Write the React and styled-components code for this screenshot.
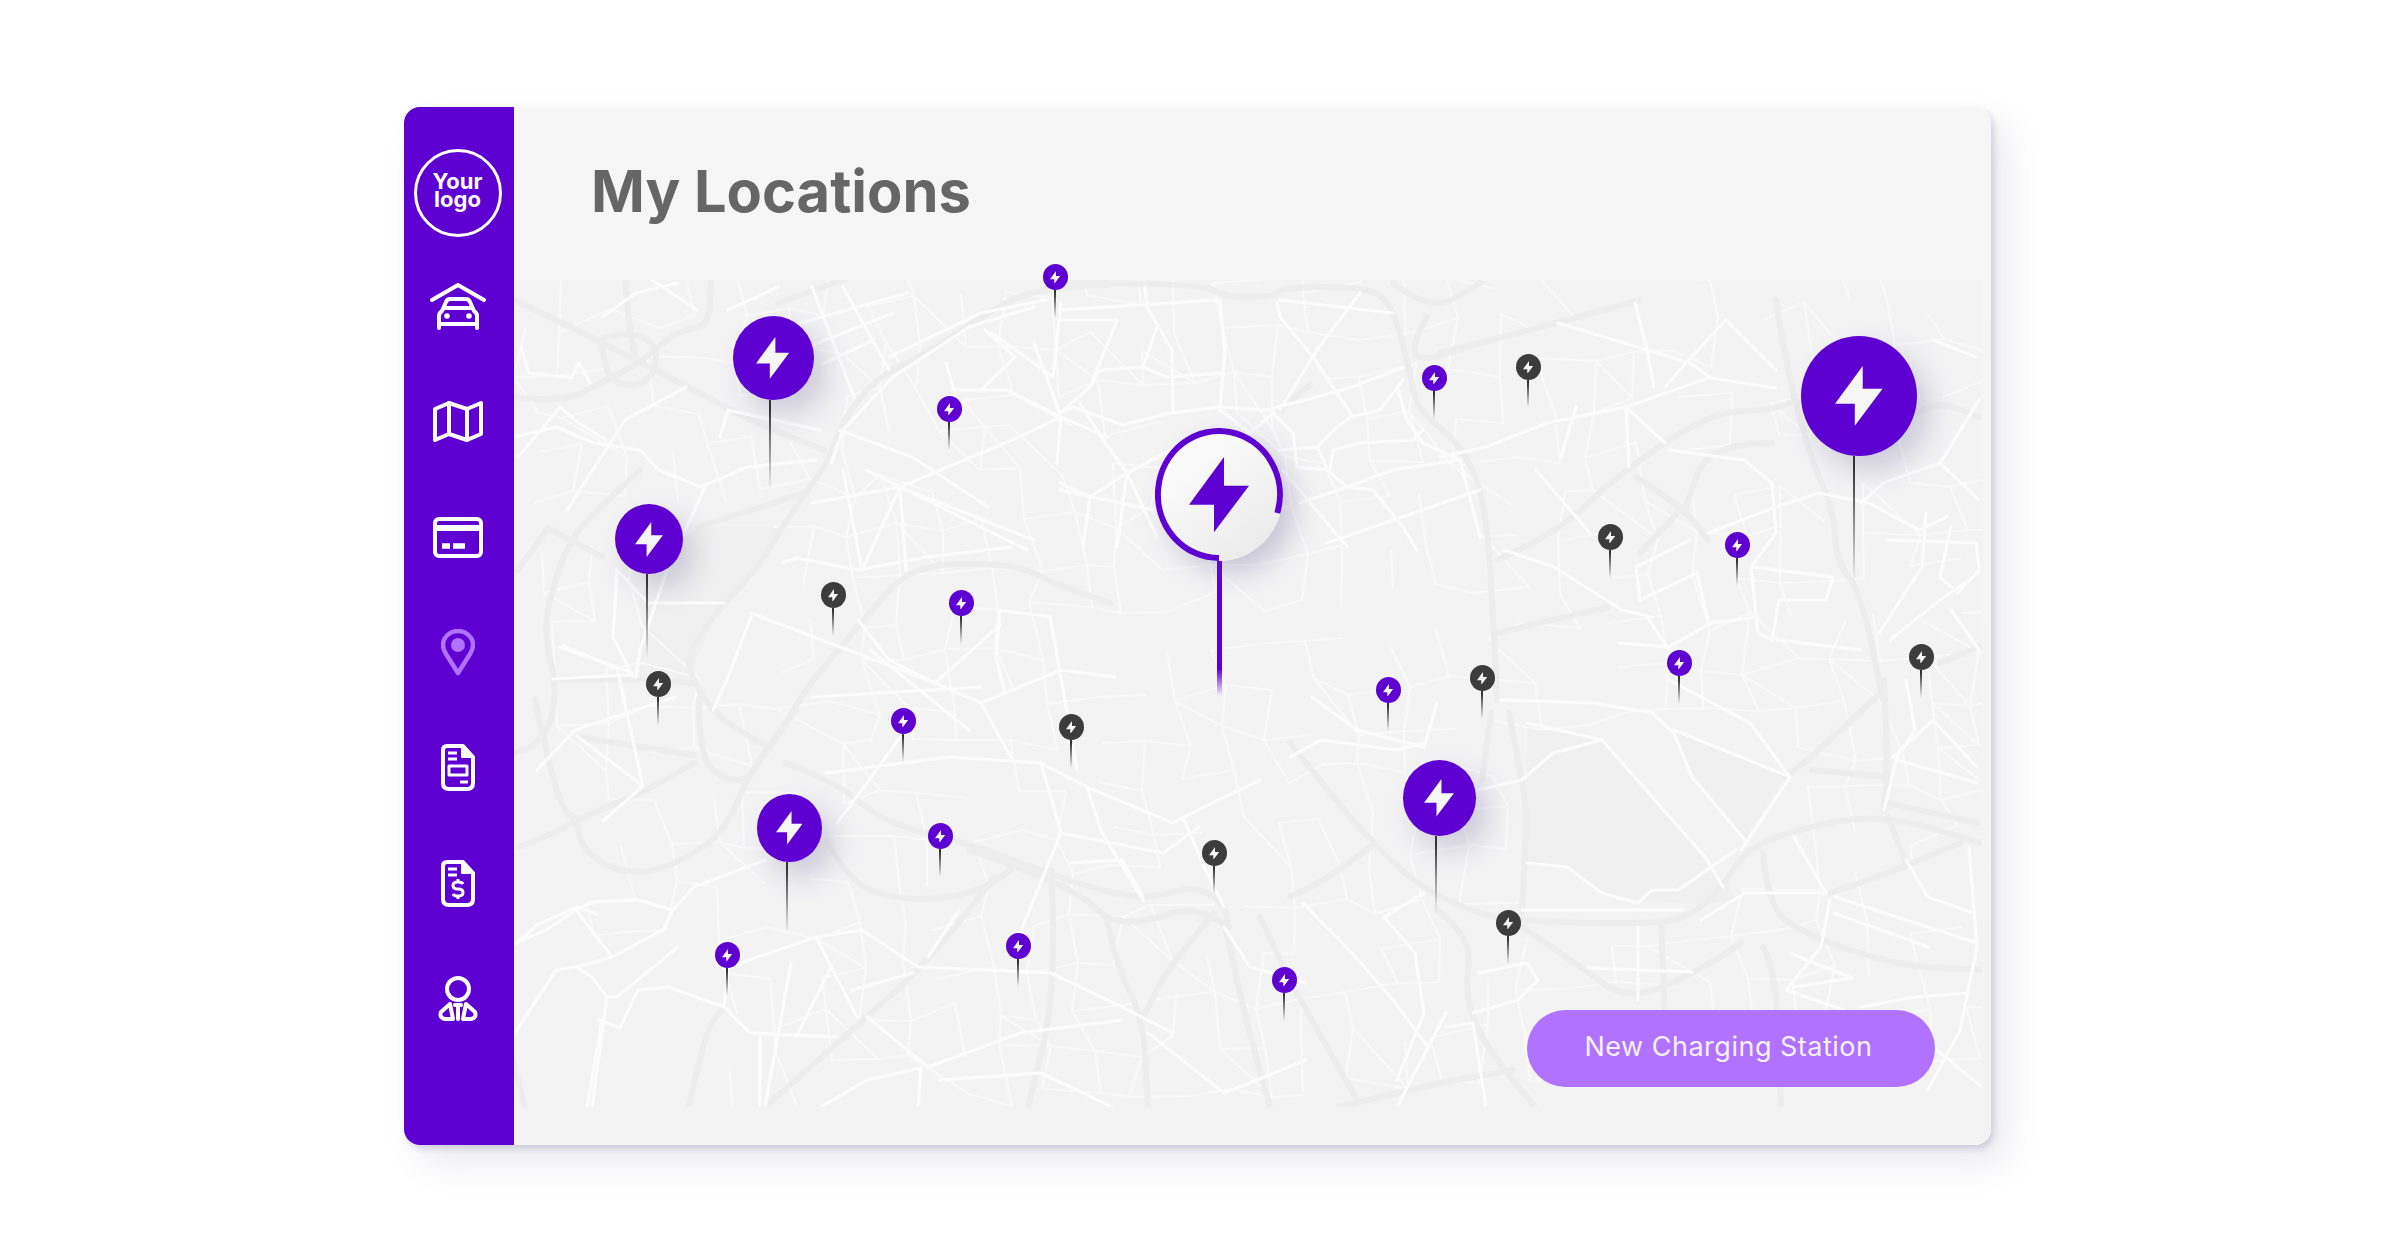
import React from 'react'
import styled, { createGlobalStyle } from 'styled-components'

const PURPLE = '#5f00d3'
const LILAC = '#b072ff'
const DARK = '#3c3c3c'

// map drawing uses the coordinates of the full page, the viewBox crops it
const MAP_X = 514
const MAP_Y = 280
const MAP_W = 1468
const MAP_H = 827

const GlobalStyle = createGlobalStyle`
  html, body { margin: 0; background: #fff; }
  body { font-family: Inter, "Liberation Sans", sans-serif; }
`

const Page = styled.div`
  width: 2400px;
  height: 1260px;
  padding: 107px 0 0 404px;
  box-sizing: border-box;
  background: #fff;
  overflow: hidden;
`

const Card = styled.div`
  display: flex;
  width: 1587px;
  height: 1038px;
  border-radius: 16px;
  background: linear-gradient(to bottom, #f6f6f6, #f3f3f3);
  box-shadow: 3px 4px 6px rgba(110, 105, 150, 0.24), 16px 18px 34px rgba(110, 105, 150, 0.14);
`

const Sidebar = styled.nav`
  display: flex;
  flex-direction: column;
  align-items: center;
  flex: 0 0 110px;
  padding: 42px 3px 0 0;
  box-sizing: border-box;
  background: ${PURPLE};
  border-radius: 16px 0 0 16px;
`

const Logo = styled.div`
  width: 88px;
  height: 88px;
  box-sizing: border-box;
  padding-top: 20px;
  margin-bottom: 12px;
  border: 3px solid #fff;
  border-radius: 50%;
  color: #fff;
  font-size: 22px;
  font-weight: 700;
  line-height: 18px;
  text-align: center;
`

const NavItem = styled.div`
  display: flex;
  align-items: center;
  justify-content: center;
  height: 115.3px;
  color: ${p => (p.$active ? LILAC : '#fff')};
`

const Main = styled.div`
  display: flex;
  flex-direction: column;
  flex: 1;
  min-width: 0;
`

const Header = styled.header`
  display: flex;
  align-items: center;
  flex: 0 0 173px;
  box-sizing: border-box;
  padding: 0 0 4px 77px;
`

const Title = styled.h1`
  margin: 0;
  color: #666;
  font-size: 57.8px;
  font-weight: 700;
  line-height: 1;
`

const MapArea = styled.div`
  position: relative;
  width: ${MAP_W}px;
  height: ${MAP_H}px;
  background: #f3f3f4;
`

const Roads = styled.svg`
  display: block;
  width: 100%;
  height: 100%;
`

const PinWrap = styled.div`
  position: absolute;
  left: ${p => p.$x - MAP_X}px;
  top: ${p => p.$y - MAP_Y}px;
  display: flex;
  flex-direction: column;
  align-items: center;
  width: ${p => p.$size}px;
  margin-left: ${p => -p.$size / 2}px;
  margin-top: ${p => (-p.$size * 1.035) / 2}px;
`

const PinHead = styled.div`
  display: flex;
  align-items: center;
  justify-content: center;
  width: ${p => p.$size}px;
  height: ${p => p.$size * 1.035}px;
  border-radius: 50%;
  background: ${p => p.$color};
  box-shadow: ${p => (p.$big ? '12px 14px 28px rgba(85, 75, 135, 0.24)' : 'none')};
`

const PinStem = styled.div`
  width: 2px;
  height: ${p => p.$length}px;
  margin-right: ${p => p.$shift}px;
  background: linear-gradient(to bottom, #333 10%, rgba(70, 70, 70, 0));
`

const HeroWrap = styled.div`
  position: absolute;
  left: ${1155 - MAP_X}px;
  top: ${428 - MAP_Y}px;
  display: flex;
  flex-direction: column;
  align-items: center;
  width: 128px;
`

const HeroDisc = styled.div`
  position: relative;
  display: flex;
  align-items: center;
  justify-content: center;
  width: 128px;
  height: 133px;
  border-radius: 50%;
  background: linear-gradient(140deg, #f9f9f9 30%, #e9e9ea 95%);
  box-shadow: 12px 12px 26px rgba(85, 75, 135, 0.26);
`

const HeroRing = styled.svg`
  position: absolute;
  inset: 0;
`

const HeroStem = styled.div`
  width: 5px;
  height: 135px;
  background: linear-gradient(to bottom, ${PURPLE} 80%, rgba(95, 0, 211, 0));
`

const AddButton = styled.button`
  position: absolute;
  right: 47px;
  bottom: 20px;
  width: 408px;
  height: 77px;
  padding: 0 5px 4px 0;
  border: 0;
  border-radius: 39px;
  background: ${LILAC};
  color: #f7f1ff;
  font-family: inherit;
  font-size: 27px;
  font-weight: 400;
  letter-spacing: 0.5px;
`

const Bolt = ({ width, color }) => (
  <svg width={width} height={(width * 226) / 180} viewBox="0 0 180 226">
    <polygon points="105,0 0,143 75,143 75,226 180,86 105,86" fill={color} />
  </svg>
)

const iconProps = {
  fill: 'none',
  stroke: 'currentColor',
  strokeWidth: 4,
  strokeLinejoin: 'round',
  strokeLinecap: 'round',
}

const GarageIcon = () => (
  <svg width="56" height="47" viewBox="0 0 56 47" {...iconProps}>
    <path d="M2 17 28 2 54 17" />
    <path d="M9 45V33q0-3 3-5l4-9q1-3 4-3h16q3 0 4 3l4 9q3 2 3 5v12" />
    <path d="M15 25h26M9 41h38" />
    <circle cx="17" cy="33" r="2.800" fill="currentColor" stroke="none" />
    <circle cx="39" cy="33" r="2.800" fill="currentColor" stroke="none" />
  </svg>
)

const MapIcon = () => (
  <svg width="50" height="41" viewBox="0 0 50 41" {...iconProps}>
    <path d="M2 8 16 2 34 8 48 2V33L34 39 16 33 2 39z" />
    <path d="M16 2V33M34 8V39" />
  </svg>
)

const CardIcon = () => (
  <svg width="50" height="41" viewBox="0 0 50 41" {...iconProps}>
    <rect x="2" y="2" width="46" height="37" rx="4" />
    <path d="M2 11h46" strokeWidth="6" strokeLinecap="butt" />
    <path d="M9 29h8M20 29h12" strokeWidth="5.500" strokeLinecap="butt" />
  </svg>
)

const PinIcon = () => (
  <svg width="34" height="47" viewBox="0 0 34 47" {...iconProps} strokeWidth="4.500">
    <path d="M17 44 5 25Q2 20 2 16a15 14 0 0 1 30 0q0 4-3 9z" />
    <circle cx="17" cy="16" r="7" fill="currentColor" stroke="none" />
  </svg>
)

const DocOutline = () => (
  <>
    <path d="M6 2h16l10 11v26q0 6-6 6H8q-6 0-6-6V6q0-4 4-4z" />
    <path d="M21 3v10h10z" fill="currentColor" strokeWidth="2" />
  </>
)

const DocIcon = () => (
  <svg width="34" height="47" viewBox="0 0 34 47" {...iconProps}>
    <DocOutline />
    <path d="M7 9h9M7 15h9M19 38h8" strokeWidth="3" strokeLinecap="butt" />
    <rect x="8" y="22" width="18" height="9" strokeWidth="3" />
  </svg>
)

const DollarDocIcon = () => (
  <svg width="34" height="47" viewBox="0 0 34 47" {...iconProps}>
    <DocOutline />
    <path d="M7 9h9M7 15h9" strokeWidth="3" strokeLinecap="butt" />
    <path d="M22 24q-1-2-5-2-5 0-5 3.500t5 3.500q5 0 5 3.500t-5 3.500q-4 0-5-2M17 19v3M17 36v3" strokeWidth="3" strokeLinecap="butt" />
  </svg>
)

const UserIcon = () => (
  <svg width="40" height="45" viewBox="0 0 40 45" {...iconProps}>
    <circle cx="20" cy="13" r="11" />
    <path d="M12 28 3 36q-2 6 4 7h8zM28 28l9 8q2 6-4 7h-8z" />
    <path d="M20 30v13M17 29h6" />
  </svg>
)

const NAV = [
  { id: 'stations', icon: <GarageIcon /> },
  { id: 'map', icon: <MapIcon /> },
  { id: 'payment', icon: <CardIcon /> },
  { id: 'locations', icon: <PinIcon />, active: true },
  { id: 'reports', icon: <DocIcon /> },
  { id: 'invoices', icon: <DollarDocIcon /> },
  { id: 'account', icon: <UserIcon /> },
]

// small pins: x, y of the head centre
const PURPLE_PINS = [
  [1055, 277], [949, 409], [1434, 378], [1737, 545], [961, 603], [903, 721],
  [1388, 690], [1679, 663], [940, 836], [727, 955], [1018, 946], [1284, 980],
]
const DARK_PINS = [
  [1528, 367], [1610, 537], [833, 595], [658, 684], [1071, 727], [1482, 678],
  [1921, 657], [1214, 853], [1508, 923],
]
const BIG_PINS = [
  { x: 773, y: 358, size: 81, stem: 90, shift: 6 },
  { x: 649, y: 539, size: 68, stem: 84, shift: 4 },
  { x: 789, y: 828, size: 65, stem: 71, shift: 5 },
  { x: 1439, y: 798, size: 73, stem: 77, shift: 6 },
  { x: 1859, y: 396, size: 116, stem: 127, shift: 10 },
]

// parks, a shade darker than the ground
const PARKS = [
  '1527,723 1600,740 1705,860 1738,900 1700,905 1640,900 1600,893 1565,865 1527,862',
  '1672,730 1785,777 1745,840 1700,790',
  '698,527 782,527 750,580 715,620 686,680 640,680 640,600 660,560',
]

// grey main roads and the river banks
const MAIN_ROADS = [
  '514,300 571,327 636,360 694,390 755,423 824,450',
  '514,397 564,403 606,380 640,363 678,330 709,327 711,280',
  '625,280 629,327 636,360',
  '778,303 843,280',
  '600,340 625,330 660,345 650,385 610,385 600,340',
  '1107,285 1034,287 981,317 927,353 877,377 843,420 828,460 820,473 782,527 759,567 717,610 686,657 694,683 717,717 767,747',
  '805,493 698,527',
  '640,470 594,513 568,543 548,603 545,637 556,683 552,723 533,747 514,753',
  '548,528 602,557',
  '548,528 518,570',
  '552,680 636,678 694,683',
  '579,737 694,755',
  '1111,603 1061,587 1023,567 973,563 931,565 897,580 870,613 832,657 805,690 774,743 751,770 724,833 683,860 648,873 612,870 581,847 576,820',
  '699,700 699,757 724,780 750,780 765,750 796,710',
  '520,847 561,830 576,820 648,790 694,763',
  '535,700 546,750 561,807 576,820',
  '786,763 837,783 877,817 923,833 979,847 1020,863 1087,887 1148,900 1194,885 1224,903 1229,927',
  '826,840 847,877 882,897 933,900 984,890 1020,863',
  '969,850 1046,877 1092,903 1107,920 1143,923 1189,907 1224,923',
  '995,877 933,957 867,1017 765,1107',
  '1051,870 1058,983 1028,1107',
  '1107,920 1117,967 1143,1017 1148,1107',
  '1214,913 1168,967 1143,1017',
  '1224,923 1245,1017 1270,1107',
  '1260,917 1291,983 1299,997 1357,1100',
  '689,1107 704,1033 724,1007',
  '510,1050 525,1107',
  '1290,743 1330,793 1370,840 1419,887 1477,913 1509,920 1580,923 1647,923 1683,920 1719,893 1745,850 1794,830 1879,813 1982,843',
  '1290,897 1321,883 1370,847',
  '1491,713 1482,780',
  '1509,713 1522,780 1527,813 1522,913',
  '1437,910 1473,937 1464,997 1486,1047 1535,1107',
  '1661,923 1665,1013',
  '1522,927 1576,963 1629,1003 1705,967 1741,943',
  '1763,947 1777,973 1781,1107',
  '1763,853 1768,907 1803,933 1870,957 1915,967 1982,970',
  '1830,893 1879,877 1960,843',
  '1884,680 1888,763 1884,810',
  '1884,690 1812,757 1785,777',
  '1812,770 1888,777',
  '1888,803 1977,823',
  '1888,817 1906,863',
  '1339,1107 1437,1083 1513,1070',
  '1776,300 1786,367 1811,460 1833,507 1836,560 1861,593 1883,700',
  '1440,353 1558,323 1640,300',
  '1060,283 1203,283 1223,297 1277,297 1280,287 1370,287 1393,307 1410,373 1417,410 1460,443 1486,500 1494,633 1497,700',
  '1427,317 1413,340 1417,363 1480,343',
  '1393,283 1430,313 1480,283',
  '1497,560 1558,533 1615,477 1708,413 1772,410 1797,400',
  '1772,443 1708,443 1686,507',
  '1636,477 1683,507 1708,540',
  '1683,507 1640,553',
  '1497,633 1608,607',
  '1918,413 1936,400 1979,417',
  '1940,663 1979,647',
  '1280,410 1310,385',
]

// white streets
const STREETS = [
  '1060,413 1073,407 1123,425 1170,413 1220,407 1267,410 1343,390 1403,368',
  '1280,410 1317,350 1360,293',
  '1277,303 1280,317 1313,357 1353,417',
  '1173,410 1172,350 1147,307 1145,287',
  '1220,407 1225,353 1220,300',
  '1060,310 1217,300',
  '1280,300 1393,313',
  '1090,387 1100,370 1143,367 1167,377 1223,373',
  '1060,413 1090,387 1117,320 1060,320',
  '1157,327 1143,367',
  '1250,433 1273,413 1293,433 1297,467 1327,470 1347,487 1393,470 1457,460',
  '1327,467 1317,447 1337,427 1350,417 1380,410 1403,380',
  '1330,470 1333,450 1360,443 1413,440 1423,430',
  '1397,387 1407,420 1423,443 1460,460 1480,537',
  '1280,450 1317,447',
  '1283,470 1347,547',
  '1300,503 1347,487 1373,490 1403,527 1417,550',
  '1327,543 1480,490',
  '1060,483 1090,497 1127,473 1177,447 1220,430',
  '1080,403 1103,440 1127,473 1157,537',
  '1220,410 1250,433',
  '1060,490 1153,510',
  '1090,497 1083,547',
  '1127,473 1117,547',
  '812,287 854,397',
  '843,287 889,370',
  '786,327 908,293',
  '808,347 893,313',
  '824,363 874,340',
  '889,357 981,313 1046,300',
  '1034,307 969,327 893,377 843,430 831,463',
  '839,430 912,457 988,507',
  '900,487 1019,437 1061,417 1107,437',
  '946,363 954,390 1007,390 1061,417',
  '1034,343 1061,417 1057,463',
  '1061,303 1053,377 992,333',
  '985,330 1015,357 981,390',
  '514,437 556,427 594,443 640,450 659,470 701,487 747,467 816,460',
  '521,347 529,373 571,378 579,363 590,383',
  '518,457 560,407 579,423 606,440',
  '567,510 625,420 686,387',
  '720,437 728,410 820,430',
  '652,280 697,310',
  '728,310 778,287',
  '602,317 636,293 678,283',
  '782,563 797,558 858,570 927,557 1011,547',
  '900,487 812,503',
  '900,487 862,570',
  '900,487 906,570',
  '900,487 1034,540',
  '843,470 862,570',
  '866,470 1027,550',
  '751,613 935,683 981,703 1011,757',
  '858,620 889,660 935,683',
  '751,617 728,677 713,710',
  '981,703 1061,670 1115,677',
  '1004,690 996,657 1000,610 1050,617',
  '1050,617 1069,723 1077,770',
  '870,650 969,730',
  '812,697 981,687',
  '935,683 1000,625',
  '705,487 667,570 640,650 636,677',
  '617,570 613,637 633,677',
  '560,647 633,673',
  '617,570 648,603 724,603',
  '675,697 575,730 537,770',
  '515,943 546,930 576,910 592,902 638,900 673,910 694,887 765,860',
  '576,910 612,957 663,930 673,910',
  '515,1033 556,970 576,967 612,957',
  '576,967 592,977 607,997 617,997 678,947',
  '607,997 592,1107',
  '599,1020 620,1028 638,990 668,987 724,1007 750,1033 837,1037',
  '724,1007 729,967 816,937 862,930 918,967 1051,973 1122,1007 1173,1033',
  '816,937 857,1017',
  '852,990 913,973',
  '791,963 765,1107',
  '831,967 796,1037',
  '867,1017 928,1067 1020,1033 1122,1020',
  '921,1068 918,1107',
  '939,1080 1041,1073 1112,1107',
  '821,1107 867,1080 921,1068',
  '760,1033 760,1107',
  '587,1107 602,1020',
  '826,773 949,757 1041,763 1087,787 1173,823 1204,807 1260,780',
  '903,733 867,783 837,823',
  '1041,763 1061,833 1020,933',
  '1087,787 1102,833 1143,900',
  '1061,833 1163,853 1199,827',
  '1183,817 1204,867 1224,907',
  '1071,863 1122,860 1143,897',
  '959,910 928,957',
  '1224,927 1250,967 1306,983',
  '1148,1033 1224,1093 1306,1060',
  '563,646 617,668 643,786 603,821',
  '577,736 643,786',
  '553,679 630,675',
  '597,914 577,907 537,925 517,943',
  '1312,697 1357,730 1424,747 1437,703',
  '1290,757 1321,740 1397,750 1424,743',
  '1500,700 1594,703 1652,713 1674,733 1692,777 1745,840',
  '1674,730 1790,777 1741,850',
  '1790,777 1750,723 1669,680',
  '1893,757 1933,720 1977,767',
  '1602,740 1705,857 1723,887',
  '1602,740 1553,753 1522,780 1477,790',
  '1527,723 1602,740',
  '1527,863 1567,867 1602,893 1638,903 1652,890 1678,890 1736,850',
  '1522,910 1683,910',
  '1701,920 1745,893 1826,893',
  '1794,837 1826,893',
  '1835,897 1977,943',
  '1830,900 1821,947 1786,990 1844,1010',
  '1794,987 1852,978 1790,953',
  '1834,913 1928,947',
  '1906,860 1928,897 1973,913',
  '1906,680 1915,730 1897,757 1884,810',
  '1897,760 1977,783',
  '1861,1007 1915,997 1969,993',
  '1969,847 1977,947 1960,1030 1928,1090',
  '1933,1047 1982,1087',
  '1446,1013 1397,1107',
  '1478,973 1527,963 1538,980 1518,1000 1473,1013',
  '1446,1027 1473,1023 1486,1107',
  '1589,968 1692,972',
  '1638,927 1638,1000',
  '1384,917 1415,953 1424,1013 1397,1080',
  '1384,917 1424,893',
  '1303,903 1352,953 1393,1000 1428,1047',
  '1558,323 1647,350 1690,363 1711,378 1776,388',
  '1635,303 1647,350 1654,387',
  '1440,457 1486,447 1547,423 1626,407',
  '1626,407 1708,378',
  '1626,407 1665,443',
  '1626,407 1629,467',
  '1536,470 1590,533',
  '1561,457 1576,407',
  '1669,450 1744,460 1772,483 1776,533 1751,567 1758,633 1772,640',
  '1708,533 1776,507 1819,493',
  '1726,320 1686,363 1665,387',
  '1726,320 1776,370',
  '1933,340 1976,357',
  '1819,493 1869,503 1919,530 1947,517',
  '1861,503 1883,483 1940,463 1979,500',
  '1940,463 1979,400',
  '1886,540 1976,543 1979,567',
  '1926,513 1922,567 1879,633',
  '1951,527 1940,577 1958,593 1979,570',
  '1890,640 1940,600 1979,573',
  '1754,567 1833,577 1826,600 1779,600 1772,640',
  '1776,640 1861,650',
  '1951,610 1979,650',
  '1619,643 1669,647 1711,623 1758,617',
  '1647,617 1669,650',
  '1651,617 1622,610 1554,567 1504,550',
  '1697,573 1640,600 1636,567 1690,540',
  '1697,573 1708,620',
]

// rounds the corners of a traced road so it doesn't look like a zigzag
const smoothPath = points => {
  const pts = points.split(' ').map(p => p.split(',').map(Number))
  if (pts.length < 3) return `M${pts[0]}L${pts[1]}`
  let d = `M${pts[0]}`
  for (let i = 1; i < pts.length - 1; i++) {
    const mx = (pts[i][0] + pts[i + 1][0]) / 2
    const my = (pts[i][1] + pts[i + 1][1]) / 2
    d += `Q${pts[i]} ${mx},${my}`
  }
  return `${d}L${pts[pts.length - 1]}`
}

const insidePark = (x, y) =>
  (x > 1520 && x < 1740 && y > 735 && y < 895) ||
  (x > 1680 && x < 1780 && y > 745 && y < 840) ||
  (x > 650 && x < 780 && y > 530 && y < 675) ||
  (x < 700 && y > 960)

// the fine mesh of side streets, always the same thanks to the fixed seed
const buildSideStreets = () => {
  let seed = 4711
  const rnd = () => {
    seed = (seed * 16807) % 2147483647
    return seed / 2147483647
  }
  const step = 44
  const cols = Math.ceil(MAP_W / step) + 1
  const rows = Math.ceil(MAP_H / step) + 1
  const nodes = []
  for (let r = 0; r < rows; r++) {
    for (let c = 0; c < cols; c++) {
      nodes.push([
        MAP_X + c * step + (rnd() - 0.5) * 22 + r * 5,
        MAP_Y + r * step + (rnd() - 0.5) * 22 - c * 2,
      ])
    }
  }
  const lines = []
  nodes.forEach(([x, y], i) => {
    const right = (i + 1) % cols ? nodes[i + 1] : null
    const down = nodes[i + cols]
    const diag = (i + 1) % cols ? nodes[i + cols + 1] : null
    ;[[right, 0.55], [down, 0.55], [diag, 0.12]].forEach(([to, chance]) => {
      const hit = rnd() < chance
      if (!to || !hit) return
      if (insidePark(x, y) || insidePark(to[0], to[1])) return
      lines.push(`M${x.toFixed(0)} ${y.toFixed(0)}L${to[0].toFixed(0)} ${to[1].toFixed(0)}`)
    })
  })
  return lines.join('')
}

const SIDE_STREETS = buildSideStreets()

const MapDrawing = () => (
  <Roads viewBox={`${MAP_X} ${MAP_Y} ${MAP_W} ${MAP_H}`} fill="none" strokeLinejoin="round" strokeLinecap="round">
    {PARKS.map(points => (
      <polygon key={points} points={points} fill="#f0f0f0" />
    ))}
    <path d={SIDE_STREETS} stroke="#f9f9f9" strokeWidth="2.2" />
    {MAIN_ROADS.map(points => (
      <path key={points} d={smoothPath(points)} stroke="#ededed" strokeWidth="6" />
    ))}
    {STREETS.map(points => (
      <polyline key={points} points={points} stroke="#fcfcfc" strokeWidth="3.2" />
    ))}
  </Roads>
)

const Pin = ({ x, y, size, stem, color, big, shift = 0 }) => (
  <PinWrap $x={x} $y={y} $size={size}>
    <PinHead $size={size} $color={color} $big={big}>
      <Bolt width={size * 0.41} color="#f6f6f6" />
    </PinHead>
    <PinStem $length={stem} $shift={shift} />
  </PinWrap>
)

const HeroPin = () => (
  <HeroWrap>
    <HeroDisc>
      <HeroRing width="128" height="133" viewBox="0 0 128 133" fill="none">
        <path d="M122.300 85A61 63.500 0 1 0 64 130" stroke={PURPLE} strokeWidth="6" />
      </HeroRing>
      <Bolt width={60} color={PURPLE} />
    </HeroDisc>
    <HeroStem />
  </HeroWrap>
)

export default function App() {
  return (
    <Page>
      <GlobalStyle />
      <Card>
        <Sidebar>
          <Logo>Your<br />logo</Logo>
          {NAV.map(item => (
            <NavItem key={item.id} $active={item.active}>{item.icon}</NavItem>
          ))}
        </Sidebar>
        <Main>
          <Header>
            <Title>My Locations</Title>
          </Header>
          <MapArea>
            <MapDrawing />
            {PURPLE_PINS.map(([x, y]) => (
              <Pin key={`${x}-${y}`} x={x} y={y} size={25} stem={28} color={PURPLE} />
            ))}
            {DARK_PINS.map(([x, y]) => (
              <Pin key={`${x}-${y}`} x={x} y={y} size={25} stem={28} color={DARK} />
            ))}
            {BIG_PINS.map(pin => (
              <Pin key={pin.x} {...pin} color={PURPLE} big />
            ))}
            <HeroPin />
            <AddButton>New Charging Station</AddButton>
          </MapArea>
        </Main>
      </Card>
    </Page>
  )
}
